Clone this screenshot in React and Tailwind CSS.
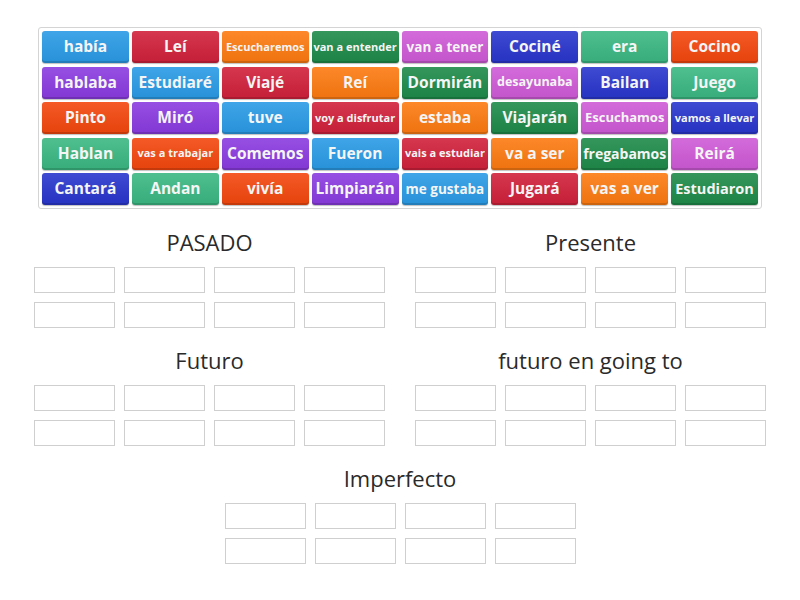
const colors = [
  "bg-[#2b9be6]",
  "bg-[#d1223c]",
  "bg-[#fd7b12]",
  "bg-[#1f8b4a]",
  "bg-[#cf5bd7]",
  "bg-[#2a37cd]",
  "bg-[#3cb883]",
  "bg-[#f4480f]",
  "bg-[#8b3ce0]",
];

const words = [
  "había", "Leí", "Escucharemos", "van a entender", "van a tener", "Cociné", "era", "Cocino",
  "hablaba", "Estudiaré", "Viajé", "Reí", "Dormirán", "desayunaba", "Bailan", "Juego",
  "Pinto", "Miró", "tuve", "voy a disfrutar", "estaba", "Viajarán", "Escuchamos", "vamos a llevar",
  "Hablan", "vas a trabajar", "Comemos", "Fueron", "vais a estudiar", "va a ser", "fregabamos", "Reirá",
  "Cantará", "Andan", "vivía", "Limpiarán", "me gustaba", "Jugará", "vas a ver", "Estudiaron",
];

const sizes = {
  "Escucharemos": "text-[11px]",
  "van a entender": "text-[11px]",
  "voy a disfrutar": "text-[11px]",
  "vas a trabajar": "text-[11px]",
  "vais a estudiar": "text-[11px]",
  "vamos a llevar": "text-[11px]",
  "desayunaba": "text-[12.5px]",
  "Escuchamos": "text-[13px]",
  "van a tener": "text-[13.5px]",
  "me gustaba": "text-[13.5px]",
  "fregabamos": "text-[14px]",
  "Estudiaron": "text-[14.5px]",
};

function Tile({ word, i }) {
  return (
    <div
      className={`${colors[i % 9]} bg-linear-to-b from-white/10 to-black/5 h-[32px] rounded-[3px] flex items-center justify-center text-[#f5f5f5] font-bold whitespace-nowrap overflow-hidden shadow-[inset_0_-2px_0_rgba(0,0,0,0.15),0_1px_1px_rgba(0,0,0,0.25)] ${sizes[word] || "text-[15.5px]"}`}
    >
      {word}
    </div>
  );
}

function Group({ title }) {
  return (
    <div className="w-[351px] flex flex-col">
      <div className="text-[22px] leading-[28px] text-[#2a2a2a] text-center">{title}</div>
      <div className="grid grid-cols-4 gap-[9px] mt-[11px]">
        {Array.from({ length: 8 }).map((_, i) => (
          <div key={i} className="h-[26px] border border-[#cfcfcf] bg-white" />
        ))}
      </div>
    </div>
  );
}

export default function App() {
  return (
    <div className="w-[800px] h-[600px] bg-white font-['Open_Sans',sans-serif] overflow-hidden">
      <div className="pt-[27px] flex justify-center">
        <div className="w-[724px] border border-[#d4d4d4] rounded-[3px] p-[3px] grid grid-cols-8 gap-x-[3px] gap-y-[3.5px]">
          {words.map((w, i) => (
            <Tile key={i} word={w} i={i} />
          ))}
        </div>
      </div>
      <div className="mt-[19px] flex flex-col items-center gap-[18px]">
        <div className="flex gap-[30px]">
          <Group title="PASADO" />
          <Group title="Presente" />
        </div>
        <div className="flex gap-[30px]">
          <Group title="Futuro" />
          <Group title="futuro en going to" />
        </div>
        <Group title="Imperfecto" />
      </div>
    </div>
  );
}
